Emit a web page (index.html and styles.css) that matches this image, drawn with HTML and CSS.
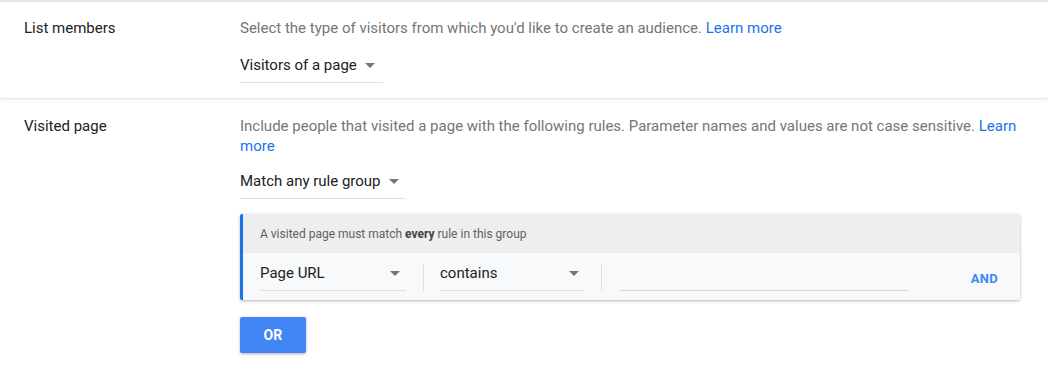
FILE: index.html
```html
<!DOCTYPE html>
<html>
<head>
<meta charset="utf-8">
<link rel="stylesheet" href="styles.css">
</head>
<body>
<div class="page">
  <section class="row first">
    <div class="label">List members</div>
    <div class="content">
      <p class="desc">Select the type of visitors from which you'd like to create an audience. <a class="link" href="#">Learn more</a></p>
      <div class="select select-visitors"><span class="select-text">Visitors of a page</span><span class="caret"></span></div>
    </div>
  </section>
  <section class="row second">
    <div class="label">Visited page</div>
    <div class="content">
      <p class="desc">Include people that visited a page with the following rules. Parameter names and values are not case sensitive. <a class="link" href="#">Learn more</a></p>
      <div class="select select-match"><span class="select-text">Match any rule group</span><span class="caret"></span></div>
      <div class="card">
        <div class="card-head">A visited page must match <b>every</b> rule in this group</div>
        <div class="card-body">
          <div class="select rule-select rs1"><span class="select-text">Page URL</span><span class="caret"></span></div>
          <div class="divider"></div>
          <div class="select rule-select rs2"><span class="select-text">contains</span><span class="caret"></span></div>
          <div class="divider d2"></div>
          <div class="input"></div>
          <div class="spacer"></div>
          <button class="and">AND</button>
        </div>
      </div>
      <button class="or">OR</button>
    </div>
  </section>
</div>
</body>
</html>
```
FILE: styles.css
```css
* { box-sizing: border-box; }
html, body { margin: 0; padding: 0; background: #fff; }
body {
  font-family: Roboto, "Noto Sans", Arial, sans-serif;
  font-size: 15px;
  color: #212121;
  width: 1048px;
  height: 369px;
  overflow: hidden;
}
.page {
  border-top: 2px solid #e6e6e6;
}
.row {
  display: flex;
}
.first {
  padding: 16px 0 15px;
  border-bottom: 1px solid #e6e6e6;
  box-shadow: 0 1px 2px rgba(0,0,0,0.06);
}
.second {
  padding: 17px 0 0;
}
.label {
  width: 240px;
  padding-left: 24px;
  line-height: 20px;
  color: #212121;
}
.content {
  flex: 1;
  padding-right: 28px;
}
.desc {
  margin: 0;
  line-height: 20px;
  color: #757575;
}
.link {
  color: #1a73e8;
  text-decoration: none;
}
.select {
  display: inline-flex;
  align-items: center;
  line-height: 20px;
  padding-bottom: 7px;
  border-bottom: 1px solid #e0e0e0;
  color: #212121;
}
.select-visitors { margin-top: 17px; width: 143px; }
.select-match { margin-top: 15px; width: 165px; }
.caret {
  width: 0;
  height: 0;
  border-left: 5px solid transparent;
  border-right: 5px solid transparent;
  border-top: 5px solid #757575;
  margin-left: 8px;
  margin-top: 1px;
}
.card {
  margin-top: 15px;
  width: 780px;
  border-left: 3px solid #1a73e8;
  border-radius: 2px;
  box-shadow: 0 1px 3px rgba(0,0,0,0.3);
  overflow: hidden;
}
.card-head {
  background: #eeeeee;
  font-size: 12px;
  line-height: 16px;
  color: #616161;
  padding: 12px 17px 11px;
}
.card-head b { color: #424242; font-weight: 700; }
.card-body {
  background: #f8f9fa;
  display: flex;
  align-items: flex-start;
  padding: 10px 22px 9px 17px;
}
.rule-select {
  justify-content: space-between;
  padding-right: 6px;
}
.rs1 { width: 146px; }
.rs2 { width: 145px; }
.divider {
  width: 1px;
  height: 27px;
  background: #e0e0e0;
  margin: 1px 16px 0 17px;
}
.d2 { margin: 1px 17px 0 16px; }
.input {
  width: 290px;
  height: 28px;
  border-bottom: 1px solid #d8d8d8;
}
.spacer { flex: 1; }
.and {
  align-self: center;
  background: none;
  border: 0;
  padding: 0;
  font-family: Roboto, "Noto Sans", Arial, sans-serif;
  font-size: 13px;
  font-weight: 700;
  color: #4285f4;
  margin-top: 2px;
  letter-spacing: 0.3px;
}
.or {
  display: block;
  margin-top: 17px;
  width: 66px;
  height: 36px;
  background: #4285f4;
  color: #fff;
  border: 0;
  border-radius: 2px;
  font-family: Roboto, "Noto Sans", Arial, sans-serif;
  font-size: 14px;
  font-weight: 700;
  letter-spacing: 0.3px;
  box-shadow: 0 1px 3px rgba(0,0,0,0.3);
}
```
